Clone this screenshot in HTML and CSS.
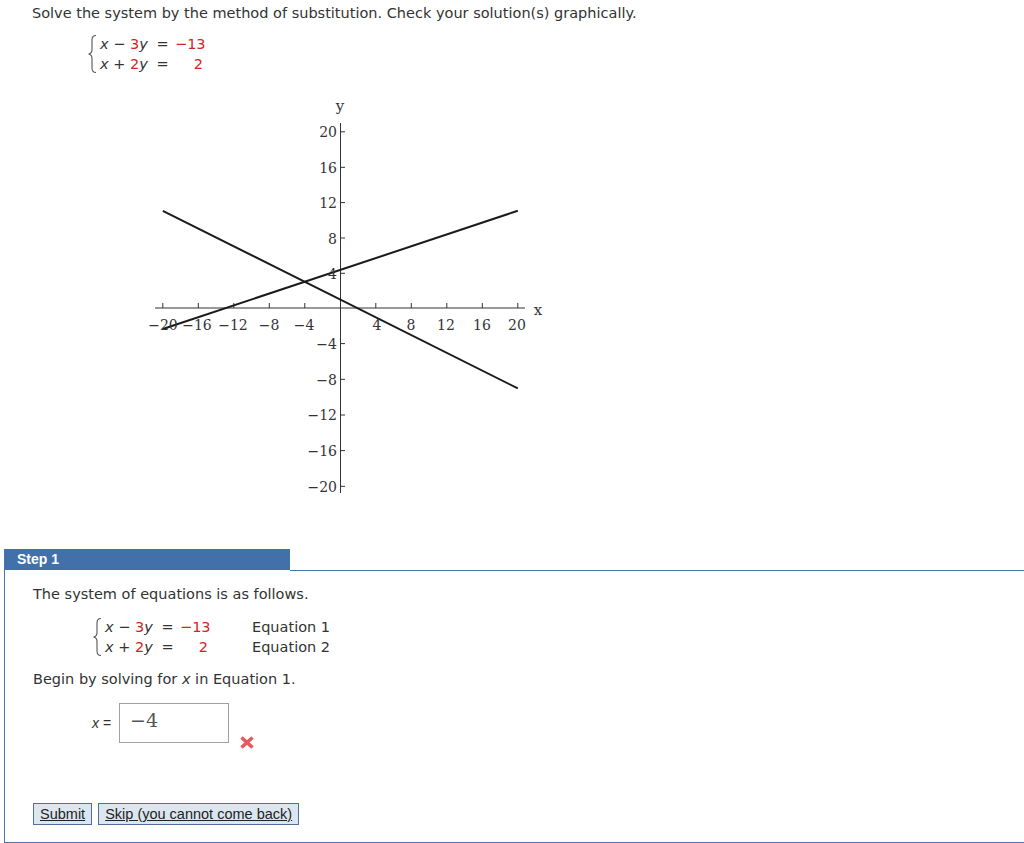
FILE: index.html
```html
<!DOCTYPE html>
<html>
<head>
<meta charset="utf-8">
<link rel="stylesheet" href="styles.css">
</head>
<body>
<div class="page">
  <p class="prompt">Solve the system by the method of substitution. Check your solution(s) graphically.</p>
  <div class="system sys-top">
    <svg class="brace" width="10" height="40" viewBox="0 0 10 40"><path d="M9 1.5 C6 1.5 5 3 5 6 L5 15.5 C5 18.5 4 19.6 1.5 20 C4 20.4 5 21.5 5 24.5 L5 34 C5 37 6 38.5 9 38.5" fill="none" stroke="#555" stroke-width="1.1"/></svg>
    <div class="eqs">
      <div class="eq"><span class="lhs"><i>x</i> − <span class="red">3</span><i>y</i></span><span class="sign">=</span><span class="rhs red">−13</span></div>
      <div class="eq"><span class="lhs"><i>x</i> + <span class="red">2</span><i>y</i></span><span class="sign">=</span><span class="rhs red">2</span></div>
    </div>
  </div>

  <svg class="graph" width="420" height="410" viewBox="140 90 420 410">
    <g stroke="#333" stroke-width="1" fill="none">
      <line x1="155" y1="308" x2="525" y2="308"/>
      <line x1="340.5" y1="123" x2="340.5" y2="493"/>
      <line x1="162.8" y1="303" x2="162.8" y2="308"/>
      <line x1="198.3" y1="303" x2="198.3" y2="308"/>
      <line x1="233.8" y1="303" x2="233.8" y2="308"/>
      <line x1="269.3" y1="303" x2="269.3" y2="308"/>
      <line x1="304.8" y1="303" x2="304.8" y2="308"/>
      <line x1="375.8" y1="303" x2="375.8" y2="308"/>
      <line x1="411.3" y1="303" x2="411.3" y2="308"/>
      <line x1="446.8" y1="303" x2="446.8" y2="308"/>
      <line x1="482.3" y1="303" x2="482.3" y2="308"/>
      <line x1="517.8" y1="303" x2="517.8" y2="308"/>
      <line x1="340.5" y1="131.8" x2="345" y2="131.8"/>
      <line x1="340.5" y1="167.3" x2="345" y2="167.3"/>
      <line x1="340.5" y1="202.6" x2="345" y2="202.6"/>
      <line x1="340.5" y1="238" x2="345" y2="238"/>
      <line x1="340.5" y1="273.3" x2="345" y2="273.3"/>
      <line x1="340.5" y1="343.6" x2="345" y2="343.6"/>
      <line x1="340.5" y1="379.3" x2="345" y2="379.3"/>
      <line x1="340.5" y1="415" x2="345" y2="415"/>
      <line x1="340.5" y1="450.6" x2="345" y2="450.6"/>
      <line x1="340.5" y1="486.3" x2="345" y2="486.3"/>
    </g>
    <g stroke="#1a1a1a" stroke-width="2" fill="none">
      <line x1="162.8" y1="329" x2="517.8" y2="210.8"/>
      <line x1="162.8" y1="210.8" x2="517.8" y2="388.4"/>
    </g>
    <g class="ax-lab">
      <text x="340" y="111" text-anchor="middle">y</text>
      <text x="538" y="315" text-anchor="middle">x</text>
    </g>
    <g class="tick-lab" text-anchor="middle">
      <text x="163" y="330">−20</text>
      <text x="197" y="330">−16</text>
      <text x="233" y="330">−12</text>
      <text x="269" y="330">−8</text>
      <text x="304" y="330">−4</text>
      <text x="377" y="330">4</text>
      <text x="411" y="330">8</text>
      <text x="446" y="330">12</text>
      <text x="482" y="330">16</text>
      <text x="517" y="330">20</text>
    </g>
    <g class="tick-lab" text-anchor="end">
      <text x="337" y="137">20</text>
      <text x="337" y="172.5">16</text>
      <text x="337" y="208">12</text>
      <text x="337" y="243.5">8</text>
      <text x="337" y="278.5">4</text>
      <text x="337" y="349">−4</text>
      <text x="337" y="384.5">−8</text>
      <text x="337" y="420">−12</text>
      <text x="337" y="456">−16</text>
      <text x="337" y="491.5">−20</text>
    </g>
  </svg>

  <div class="step">
    <div class="step-head">
      <div class="tab">Step 1</div>
      <div class="tab-rest"></div>
    </div>
    <div class="step-body">
      <p class="text">The system of equations is as follows.</p>
      <div class="system sys-step">
        <svg class="brace" width="10" height="40" viewBox="0 0 10 40"><path d="M9 1.5 C6 1.5 5 3 5 6 L5 15.5 C5 18.5 4 19.6 1.5 20 C4 20.4 5 21.5 5 24.5 L5 34 C5 37 6 38.5 9 38.5" fill="none" stroke="#555" stroke-width="1.1"/></svg>
        <div class="eqs">
          <div class="eq"><span class="lhs"><i>x</i> − <span class="red">3</span><i>y</i></span><span class="sign">=</span><span class="rhs red">−13</span><span class="label">Equation 1</span></div>
          <div class="eq"><span class="lhs"><i>x</i> + <span class="red">2</span><i>y</i></span><span class="sign">=</span><span class="rhs red">2</span><span class="label">Equation 2</span></div>
        </div>
      </div>
      <p class="text begin">Begin by solving for <i>x</i> in Equation 1.</p>
      <div class="answer">
        <span class="ans-label"><i>x</i> =</span>
        <div class="ans-box">−4</div>
        <svg class="wrong" width="16" height="15" viewBox="0 0 16 15"><path d="M2.5 2.5 L13.5 12.5 M13.5 2.5 L2.5 12.5" stroke="#e25c5c" stroke-width="3.6" stroke-linecap="butt"/></svg>
      </div>
      <div class="buttons">
        <button class="btn">Submit</button>
        <button class="btn">Skip (you cannot come back)</button>
      </div>
    </div>
  </div>
</div>
</body>
</html>
```

FILE: styles.css
```css
html, body {
  margin: 0;
  padding: 0;
  background: #fff;
  overflow: hidden;
}
body {
  font-family: "DejaVu Sans", Verdana, sans-serif;
  font-size: 14.5px;
  color: #333;
}
.page {
  width: 1024px;
  height: 843px;
  overflow: hidden;
}
.prompt {
  margin: 4px 0 0 32px;
  line-height: 18px;
}
.system {
  display: flex;
  align-items: flex-start;
}
.sys-top {
  margin: 12px 0 0 87px;
}
.brace {
  display: block;
}
.eqs {
  margin-left: 3px;
}
.eq {
  display: flex;
  line-height: 20px;
  height: 20px;
}
.eq i {
  font-style: italic;
}
.lhs {
  width: 50px;
  white-space: nowrap;
}
.sign {
  width: 25px;
  text-align: center;
}
.rhs {
  width: 28px;
  text-align: right;
  white-space: nowrap;
}
.red {
  color: #d0261f;
}
.graph {
  display: block;
  margin: 16px 0 0 140px;
}
.ax-lab text {
  font-family: "DejaVu Serif", "Liberation Serif", serif;
  font-size: 15px;
  fill: #333;
}
.tick-lab text {
  font-family: "DejaVu Serif", "Liberation Serif", serif;
  font-size: 14px;
  fill: #333;
}
.step {
  margin: 49px 0 0 4px;
  width: 1025px;
  height: 294px;
  border-left: 1px solid #4a76ad;
  border-bottom: 1px solid #4a76ad;
  box-sizing: border-box;
}
.step-head {
  display: flex;
  height: 22px;
}
.tab {
  width: 285px;
  height: 21px;
  background: #4271a9;
  color: #fff;
  font-family: "Liberation Sans", Arial, sans-serif;
  font-weight: bold;
  font-size: 14px;
  line-height: 21px;
  padding-left: 12px;
  box-sizing: border-box;
}
.tab-rest {
  flex: 1;
  height: 21px;
  border-bottom: 1px solid #4a76ad;
}
.step-body {
  padding-left: 28px;
}
.text {
  margin: 0;
  line-height: 18px;
}
.step-body > .text:first-child {
  margin-top: 14px;
}
.sys-step {
  margin: 14px 0 0 59px;
}
.label {
  margin-left: 44px;
  color: #333;
}
.begin {
  margin-top: 13px;
}
.answer {
  display: flex;
  align-items: flex-start;
  margin: 15px 0 0 59px;
  height: 46px;
}
.ans-label {
  font-family: "Liberation Sans", Arial, sans-serif;
  font-size: 14px;
  margin-top: 12px;
  width: 27px;
}
.ans-box {
  width: 110px;
  height: 40px;
  box-sizing: border-box;
  border: 1px solid #a0a0a0;
  font-family: "DejaVu Serif", "Liberation Serif", serif;
  font-size: 19px;
  color: #555;
  padding: 5px 0 0 10px;
  line-height: 22px;
}
.wrong {
  display: block;
  margin: 32px 0 0 10px;
}
.buttons {
  display: flex;
  gap: 6px;
  margin-top: 54px;
}
.btn {
  font-family: "Liberation Sans", Arial, sans-serif;
  font-size: 14.5px;
  color: #222;
  text-decoration: underline;
  background: #dce6f0;
  border: 1px solid #50709c;
  height: 22px;
  padding: 0 6px;
  line-height: 20px;
  margin: 0;
  border-radius: 0;
}
```
